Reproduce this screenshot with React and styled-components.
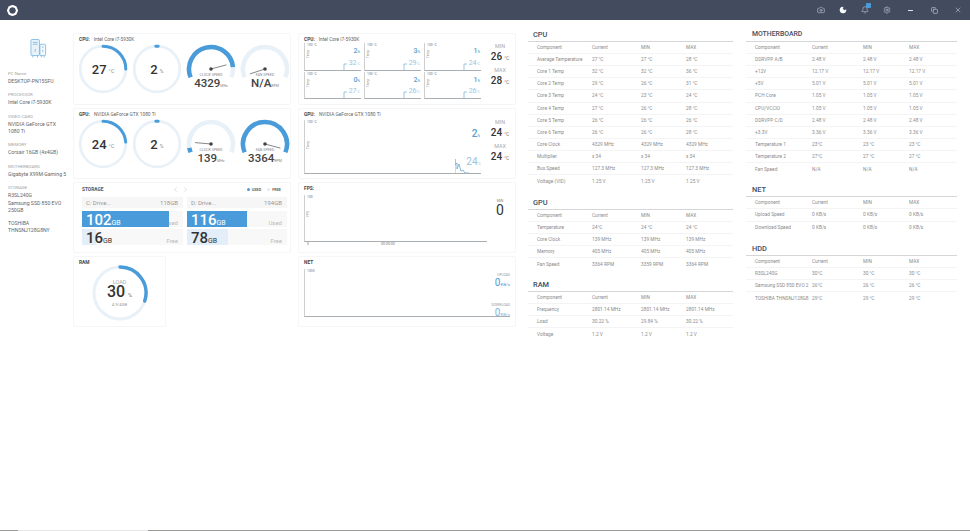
import styled, { createGlobalStyle } from 'styled-components';
import { Camera, Moon, Bell, Settings, Minus, Copy, X, ChevronLeft, ChevronRight } from 'lucide-react';

const GlobalStyle = createGlobalStyle`
    html, body { margin: 0; height: 100%; background: #fff; }
    body { font-family: Roboto, "Liberation Sans", sans-serif; overflow: hidden; }
    #root { height: 100%; }
`;

const BLUE = '#4a9bd9';
const TRACK = '#e9f1f8';

const Page = styled.div`
    display: flex;
    flex-direction: column;
    height: 531px;
    width: 970px;
    overflow: hidden;
`;

const TopBar = styled.header`
    flex: 0 0 20px;
    height: 20px;
    background: #434c5e;
    box-sizing: border-box;
    display: flex;
    align-items: center;
    padding-left: 7px;
`;

const TopIcons = styled.div`
    margin-left: auto;
    display: flex;
    align-items: center;
`;

const TopIcon = styled.span`
    position: relative;
    width: ${(p) => p.$w || 22}px;
    display: flex;
    justify-content: center;
    color: #b4bac6;
`;

const Badge = styled.span`
    position: absolute;
    top: -3px;
    left: 12px;
    width: 5px;
    height: 5px;
    border-radius: 1px;
    background: ${BLUE};
`;

const Main = styled.main`
    flex: 1;
    display: flex;
    padding-top: 13px;
    min-height: 0;
`;

const Sidebar = styled.aside`
    flex: 0 0 73px;
    box-sizing: border-box;
    padding: 5px 6px 0 8px;
`;

const PcIcon = styled.div`
    display: flex;
    justify-content: center;
    margin: 0 0 11px 0;
    padding-left: 1px;
`;

const InfoLabel = styled.div`
    font-size: 4.4px;
    line-height: 7px;
    color: #a4a4a4;
    margin-top: ${(p) => p.$top ?? 6.4}px;
`;

const InfoValue = styled.div`
    font-size: 5.15px;
    line-height: 7px;
    color: #666;
    margin-top: ${(p) => p.$top ?? 1}px;
`;

const Dash = styled.section`
    flex: 0 0 443px;
    display: grid;
    grid-template-columns: 218px 218px;
    grid-template-rows: 72px 71px 71px 71px;
    gap: 3px 7px;
    align-content: start;
`;

const Card = styled.div`
    position: relative;
    box-sizing: border-box;
    border: 1px solid #f5f6f7;
    border-radius: 2px;
    background: #fff;
    padding: 2px 5px 0;
    width: ${(p) => p.$width || 'auto'};
`;

const CardTitle = styled.div`
    display: flex;
    gap: 4px;
    font-size: 4.8px;
    line-height: 7px;
    color: #666;
    & b { font-weight: 700; color: #444; }
`;

const GaugeRow = styled.div`
    display: grid;
    grid-template-columns: repeat(4, 54px);
    margin: 1px 0 0 -3px;
`;

const GaugeBox = styled.div`
    position: relative;
    width: 54px;
    height: 52px;
    display: flex;
    justify-content: center;
    & svg { display: block; }
`;

const RingText = styled.div`
    position: absolute;
    inset: 0 0 2px 0;
    display: flex;
    align-items: center;
    justify-content: center;
    gap: 2px;
    font-size: 13px;
    font-weight: 500;
    color: #333;
    letter-spacing: 0.2px;
    & small { font-size: 5px; font-weight: 400; color: #888; margin-top: 3px; }
`;

const SpeedText = styled.div`
    position: absolute;
    left: 0;
    right: 0;
    top: 29px;
    text-align: center;
    color: #444;
    font-size: 11.5px;
    font-weight: 500;
    line-height: 11px;
    & span { display: block; font-size: 3.6px; line-height: 5px; font-weight: 400; color: #888; }
    & small { font-size: 3.6px; font-weight: 400; color: #888; }
`;

function arc(cx, cy, r, a0, a1) {
    const p = (a) => [cx + r * Math.sin((a * Math.PI) / 180), cy - r * Math.cos((a * Math.PI) / 180)];
    const [x0, y0] = p(a0);
    const [x1, y1] = p(a1);
    return `M${x0} ${y0}A${r} ${r} 0 ${a1 - a0 > 180 ? 1 : 0} 1 ${x1} ${y1}`;
}

function Ring({ value, unit, from = 0, to }) {
    return (
        <GaugeBox>
            <svg width="50" height="50" viewBox="0 0 50 50">
                <circle cx="25" cy="25" r="22.8" fill="none" stroke={TRACK} strokeWidth="2.8" />
                <path d={arc(25, 25, 22.8, from, to)} fill="none" stroke={BLUE} strokeWidth="3" strokeLinecap="round" />
            </svg>
            <RingText>
                {value}
                <small>{unit}</small>
            </RingText>
        </GaugeBox>
    );
}

function Speed({ value, label, unit, to, needle }) {
    const rad = (needle * Math.PI) / 180;
    return (
        <GaugeBox>
            <svg width="50" height="50" viewBox="0 0 50 50">
                <path d={arc(25, 25, 22, -112, 112)} fill="none" stroke={TRACK} strokeWidth="4.5" />
                <path d={arc(25, 25, 22, -112, to)} fill="none" stroke={BLUE} strokeWidth="4.5" />
                <line x1="25" y1="25" x2={25 + 16 * Math.sin(rad)} y2={25 - 16 * Math.cos(rad)} stroke="#555" strokeWidth="0.7" />
                <circle cx="25" cy="25" r="1.8" fill="#444" />
            </svg>
            <SpeedText>
                <span>{label}</span>
                {value}
                <small>{unit}</small>
            </SpeedText>
        </GaugeBox>
    );
}

const ChartGrid = styled.div`
    display: grid;
    grid-template-columns: repeat(3, 57px);
    grid-auto-rows: 27.5px;
    gap: 1px 3px;
`;

const ChartLayout = styled.div`
    display: flex;
    margin-top: ${(p) => p.$top ?? 2}px;
`;

const Plot = styled.div`
    position: relative;
    box-sizing: border-box;
    width: ${(p) => p.$width || 'auto'};
    height: ${(p) => p.$height || 'auto'};
    border-left: 1px solid #cfcfcf;
    border-bottom: 1px solid #a9aeb2;
`;

const PlotMax = styled.span`
    position: absolute;
    left: 2px;
    top: 0;
    font-size: 3.4px;
    line-height: 4px;
    color: #777;
`;

const PlotAxis = styled.span`
    position: absolute;
    left: 1px;
    top: ${(p) => p.$top}px;
    font-size: 3.2px;
    line-height: 4px;
    color: #888;
    writing-mode: vertical-rl;
    transform: rotate(180deg);
`;

const PlotLoad = styled.span`
    position: absolute;
    right: ${(p) => p.$right ?? 1}px;
    top: ${(p) => p.$top}px;
    font-size: ${(p) => p.$size}px;
    line-height: 1;
    font-weight: 500;
    color: #5a9fc9;
    & small { font-size: 3.4px; }
`;

const PlotTemp = styled.span`
    position: absolute;
    right: ${(p) => p.$right ?? 1}px;
    bottom: ${(p) => p.$bottom}px;
    font-size: ${(p) => p.$size}px;
    line-height: 1;
    color: #9cc4de;
    & small { font-size: 3.4px; }
`;

const Spark = styled.svg`
    position: absolute;
    left: ${(p) => p.$left}px;
    bottom: 0;
`;

function MiniChart({ load, temp }) {
    return (
        <Plot>
            <PlotMax>100 °C</PlotMax>
            <PlotAxis $top={7}>Temp</PlotAxis>
            <PlotLoad $top={5} $size={7}>
                {load}
                <small>%</small>
            </PlotLoad>
            <PlotTemp $bottom={3} $size={7}>
                {temp}
                <small>°C</small>
            </PlotTemp>
            <Spark $left={38} width="5" height="8" viewBox="0 0 5 8">
                <path d="M1 8V2H4" fill="none" stroke="#5a9fc9" strokeWidth="0.6" />
            </Spark>
        </Plot>
    );
}

const Extremes = styled.div`
    flex: 1;
    display: flex;
    flex-direction: column;
    align-items: center;
    margin: ${(p) => p.$top || 0}px -2px 0 7px;
`;

const ExtremeLabel = styled.div`
    font-size: 5.4px;
    line-height: 7px;
    color: #aaa;
    margin-top: ${(p) => p.$top || 0}px;
`;

const ExtremeValue = styled.div`
    font-size: 10px;
    line-height: 12px;
    font-weight: 500;
    color: #333;
    margin-top: 1px;
    & small { font-size: 5px; font-weight: 400; color: #777; margin-left: 2px; }
`;

const FpsSide = styled.div`
    flex: 1;
    display: flex;
    flex-direction: column;
    align-items: center;
    padding-top: 4px;
    margin-right: -3px;
    font-size: 3.6px;
    color: #888;
    line-height: 5px;
    & strong { font-size: 14px; line-height: 12px; font-weight: 400; color: #333; }
`;

const TickRow = styled.div`
    position: absolute;
    top: 100%;
    left: 2px;
    right: 0;
    display: flex;
    font-size: 3.6px;
    line-height: 6px;
    color: #777;
    & span:last-child { margin-left: 72px; }
`;

const NetLabel = styled.span`
    position: absolute;
    right: 0;
    top: ${(p) => p.$top}px;
    font-size: 3.4px;
    line-height: 4px;
    color: #999;
`;

const NetValue = styled.span`
    position: absolute;
    right: 0;
    top: ${(p) => p.$top}px;
    font-size: 10px;
    line-height: 10px;
    color: ${(p) => p.$color};
    & small { font-size: 4.4px; }
`;

const StorageHead = styled.div`
    display: flex;
    align-items: center;
    height: 9px;
    padding: 0 4px 0 3px;
    font-size: 4.8px;
    font-weight: 700;
    color: #555;
`;

const Arrows = styled.div`
    display: flex;
    gap: 3px;
    color: #b9c8d6;
    margin-left: 69px;
`;

const Legend = styled.div`
    margin-left: auto;
    display: flex;
    gap: 6px;
    font-size: 3.8px;
    color: #666;
`;

const LegendDot = styled.span`
    &::before {
        content: '';
        display: inline-block;
        width: 3px;
        height: 3px;
        border-radius: 50%;
        margin-right: 2px;
        background: ${(p) => p.$color};
    }
`;

const Drives = styled.div`
    display: grid;
    grid-template-columns: 101px 100px;
    gap: 0 4px;
    margin: 3px 0 0 3px;
`;

const Drive = styled.div`
    display: flex;
    flex-direction: column;
    gap: 2px;
`;

const DriveHead = styled.div`
    display: flex;
    justify-content: space-between;
    align-items: center;
    height: 11px;
    padding: 0 5px 0 4px;
    background: #f6f6f6;
    font-size: 6px;
    color: #999;
    margin-bottom: 1px;
`;

const DriveBar = styled.div`
    position: relative;
    height: 16px;
    background: #f8f8f8;
    overflow: hidden;
`;

const DriveFill = styled.div`
    position: absolute;
    inset: 0 auto 0 0;
    background: ${(p) => p.$color};
`;

const DriveTag = styled.span`
    position: absolute;
    right: 5px;
    bottom: 1px;
    font-size: 6px;
    line-height: 7px;
    color: #bbb;
`;

const DriveNum = styled.span`
    position: absolute;
    left: 4px;
    top: 2px;
    font-size: 15px;
    line-height: 14px;
    font-weight: 500;
    color: ${(p) => p.$color};
    & small { font-size: 7px; font-weight: 400; }
`;

function DriveRow({ value, tag, pct, fill, color }) {
    return (
        <DriveBar>
            <DriveTag>{tag}</DriveTag>
            <DriveFill $color={fill} style={{ width: `${pct}%` }} />
            <DriveNum $color={color}>
                {value}
                <small>GB</small>
            </DriveNum>
        </DriveBar>
    );
}

const RamGauge = styled.div`
    position: relative;
    display: flex;
    justify-content: center;
    margin-top: -1px;
`;

const RamText = styled.div`
    position: absolute;
    inset: 0;
    display: flex;
    flex-direction: column;
    align-items: center;
    justify-content: center;
    font-size: 5.4px;
    line-height: 6px;
    color: #aaa;
    & strong { font-size: 16px; line-height: 13px; font-weight: 500; color: #333; }
    & small { font-size: 5.5px; font-weight: 400; color: #777; margin-left: 3px; }
    & em { font-style: normal; font-size: 4.2px; line-height: 5px; color: #999; }
`;

const Tables = styled.section`
    flex: 0 0 ${(p) => p.$width}px;
    margin: -1px 0 0 ${(p) => p.$left}px;
    display: flex;
    flex-direction: column;
`;

const TableWrap = styled.div`
    margin-bottom: ${(p) => p.$gap || 0}px;
`;

const TableTitle = styled.div`
    height: 9px;
    line-height: 5px;
    padding-left: ${(p) => p.$indent}px;
    box-sizing: border-box;
    font-size: ${(p) => p.$size}px;
    font-weight: 500;
    color: #434c5e;
`;

const TRow = styled.div`
    display: grid;
    grid-template-columns: ${(p) => p.$columns};
    align-items: center;
    height: ${(p) => (p.$head ? 13 : 12.15)}px;
    box-sizing: border-box;
    padding-left: 9px;
    border-bottom: 1px solid #f4f4f4;
    border-top: ${(p) => (p.$head ? '1px solid #d5d6d8' : 'none')};
    font-size: 4.8px;
    color: #8c8c8c;
    white-space: nowrap;
    &:last-child { border-bottom: none; }
`;

function DataTable({ title, columns, rows, gap, indent = 5, size = 7.4 }) {
    return (
        <TableWrap $gap={gap}>
            <TableTitle $indent={indent} $size={size}>{title}</TableTitle>
            <div>
                <TRow $columns={columns} $head>
                    <span>Component</span>
                    <span>Current</span>
                    <span>MIN</span>
                    <span>MAX</span>
                </TRow>
                {rows.map((row) => (
                    <TRow $columns={columns} key={row[0]}>
                        {row.map((cell, i) => (
                            <span key={i}>{cell}</span>
                        ))}
                    </TRow>
                ))}
            </div>
        </TableWrap>
    );
}

const ScrollTrack = styled.div`
    flex: 0 0 1px;
    background: #9a9a96;
    padding-left: 18px;
`;

const ScrollThumb = styled.div`
    width: 130px;
    height: 1px;
    background: #e6e6e6;
`;

const same = (name, v) => [name, v, v, v];
const temp = (name, c, a, b) => [name, `${c} °C`, `${a} °C`, `${b} °C`];

const cpuRows = [
    temp('Average Temperature', 27, 27, 28),
    temp('Core 1 Temp', 32, 32, 36),
    temp('Core 2 Temp', 29, 26, 31),
    temp('Core 3 Temp', 24, 23, 24),
    temp('Core 4 Temp', 27, 26, 28),
    temp('Core 5 Temp', 26, 26, 26),
    temp('Core 6 Temp', 26, 26, 28),
    same('Core Clock', '4329 MHz'),
    same('Multiplier', 'x 34'),
    same('Bus Speed', '127.3 MHz'),
    same('Voltage (VID)', '1.25 V'),
];

const gpuRows = [
    ['Temperature', '24°C', '24 °C', '24 °C'],
    same('Core Clock', '139 MHz'),
    same('Memory', '405 MHz'),
    ['Fan Speed', '3364 RPM', '3359 RPM', '3364 RPM'],
];

const ramRows = [
    same('Frequency', '2801.14 MHz'),
    ['Load', '30.22 %', '29.84 %', '30.22 %'],
    same('Voltage', '1.2 V'),
];

const boardRows = [
    same('DDRVPP A/B', '2.48 V'),
    same('+12V', '12.17 V'),
    same('+5V', '5.01 V'),
    same('PCH Core', '1.05 V'),
    same('CPU/VCCIO', '1.05 V'),
    same('DDRVPP C/D', '2.48 V'),
    same('+3.3V', '3.36 V'),
    ['Temperature 1', '23°C', '23 °C', '23 °C'],
    ['Temperature 2', '27°C', '27 °C', '27 °C'],
    same('Fan Speed', 'N/A'),
];

const netRows = [same('Upload Speed', '0 KB/s'), same('Download Speed', '0 KB/s')];

const hddRows = [
    ['R3SL240G', '30°C', '30 °C', '30 °C'],
    ['Samsung SSD 850 EVO 2', '26°C', '26 °C', '26 °C'],
    ['TOSHIBA THNSNJ128G8', '29°C', '29 °C', '29 °C'],
];

const LEFT_COLS = '55px 49px 45px 1fr';
const RIGHT_COLS = '57px 51px 46px 1fr';

function Logo() {
    return (
        <svg width="11" height="11" viewBox="0 0 11 11">
            <path d="M5.5 1 8.7 2.3 10 5.5 8.7 8.7 5.5 10 2.3 8.7 1 5.5 2.3 2.3Z" fill="none" stroke="#fff" strokeWidth="2" strokeLinejoin="round" />
        </svg>
    );
}

function Tower() {
    return (
        <svg width="17" height="21" viewBox="0 0 18 21" fill="none" stroke="#6fb0de" strokeWidth="0.8">
            <rect x="1" y="1" width="9" height="17" rx="1.2" fill="#e8f2fa" />
            <rect x="10.5" y="6" width="6" height="12" rx="1" fill="#f2f8fc" />
            <path d="M3 4h5M3 6h5M12.5 9h2M5.5 11v3M13.5 12v2M3 18v2M8 18v2M12 18v2M15 18v2" />
        </svg>
    );
}

export default function App() {
    return (
        <Page>
            <GlobalStyle />
            <TopBar>
                <Logo />
                <TopIcons>
                    <TopIcon><Camera size={8} /></TopIcon>
                    <TopIcon><Moon size={8} fill="#fff" color="#fff" /></TopIcon>
                    <TopIcon>
                        <Bell size={8} />
                        <Badge />
                    </TopIcon>
                    <TopIcon><Settings size={8} /></TopIcon>
                    <TopIcon $w={24}><Minus size={7} strokeWidth={3} color="#fff" /></TopIcon>
                    <TopIcon $w={24}><Copy size={7} strokeWidth={2.5} /></TopIcon>
                    <TopIcon $w={24}><X size={8} /></TopIcon>
                </TopIcons>
            </TopBar>
            <Main>
                <Sidebar>
                    <PcIcon><Tower /></PcIcon>
                    <InfoLabel $top={0}>PC Name</InfoLabel>
                    <InfoValue>DESKTOP-PN15SFU</InfoValue>
                    <InfoLabel>PROCESSOR</InfoLabel>
                    <InfoValue>Intel Core i7-5930K</InfoValue>
                    <InfoLabel>VIDEO CARD</InfoLabel>
                    <InfoValue>NVIDIA GeForce GTX 1080 Ti</InfoValue>
                    <InfoLabel>MEMORY</InfoLabel>
                    <InfoValue>Corsair 16GB (4x4GB)</InfoValue>
                    <InfoLabel>MOTHERBOARD</InfoLabel>
                    <InfoValue>Gigabyte X99M-Gaming 5</InfoValue>
                    <InfoLabel>STORAGE</InfoLabel>
                    <InfoValue>R3SL240G</InfoValue>
                    <InfoValue>Samsung SSD 850 EVO 250GB</InfoValue>
                    <InfoValue $top={6}>TOSHIBA THNSNJ128G8NY</InfoValue>
                </Sidebar>
                <Dash>
                    <Card>
                        <CardTitle><b>CPU:</b> Intel Core i7-5930K</CardTitle>
                        <GaugeRow>
                            <Ring value="27" unit="°C" to={90} />
                            <Ring value="2" unit="%" from={-3} to={3} />
                            <Speed value="4329" unit="MHz" label="CLOCK SPEED" to={85} needle={75} />
                            <Speed value="N/A" unit="RPM" label="FAN SPEED" to={-112} needle={-108} />
                        </GaugeRow>
                    </Card>
                    <Card>
                        <CardTitle><b>CPU:</b> Intel Core i7-5930K</CardTitle>
                        <ChartLayout $top={0}>
                            <ChartGrid>
                                <MiniChart load="2" temp="32" />
                                <MiniChart load="3" temp="29" />
                                <MiniChart load="1" temp="24" />
                                <MiniChart load="0" temp="27" />
                                <MiniChart load="2" temp="26" />
                                <MiniChart load="1" temp="26" />
                            </ChartGrid>
                            <Extremes>
                                <ExtremeLabel>MIN</ExtremeLabel>
                                <ExtremeValue>26<small>°C</small></ExtremeValue>
                                <ExtremeLabel $top={3}>MAX</ExtremeLabel>
                                <ExtremeValue>28<small>°C</small></ExtremeValue>
                            </Extremes>
                        </ChartLayout>
                    </Card>
                    <Card>
                        <CardTitle><b>GPU:</b> NVIDIA GeForce GTX 1080 Ti</CardTitle>
                        <GaugeRow>
                            <Ring value="24" unit="°C" to={85} />
                            <Ring value="2" unit="%" from={-3} to={3} />
                            <Speed value="139" unit="MHz" label="CLOCK SPEED" to={-100} needle={-85} />
                            <Speed value="3364" unit="RPM" label="FAN SPEED" to={112} needle={105} />
                        </GaugeRow>
                    </Card>
                    <Card>
                        <CardTitle><b>GPU:</b> NVIDIA GeForce GTX 1080 Ti</CardTitle>
                        <ChartLayout>
                            <Plot $width="177px" $height="54px">
                                <PlotMax>100 °C</PlotMax>
                                <PlotAxis $top={21}>Temp</PlotAxis>
                                <PlotLoad $top={9} $size={10}>2<small>%</small></PlotLoad>
                                <PlotTemp $bottom={6} $size={10} $right={0}>24<small>°C</small></PlotTemp>
                                <Spark $left={150} width="14" height="15" viewBox="0 0 14 15">
                                    <path d="M0 15V1V7L2 5V11L4 6L6 13L8 12L10 15H14" fill="none" stroke="#5a9fc9" strokeWidth="0.7" />
                                </Spark>
                            </Plot>
                            <Extremes $top={-1}>
                                <ExtremeLabel>MIN</ExtremeLabel>
                                <ExtremeValue>24<small>°C</small></ExtremeValue>
                                <ExtremeLabel $top={3}>MAX</ExtremeLabel>
                                <ExtremeValue>24<small>°C</small></ExtremeValue>
                            </Extremes>
                        </ChartLayout>
                    </Card>
                    <Card>
                        <StorageHead>
                            STORAGE
                            <Arrows>
                                <ChevronLeft size={7} />
                                <ChevronRight size={7} />
                            </Arrows>
                            <Legend>
                                <LegendDot $color={BLUE}>USED</LegendDot>
                                <LegendDot $color="#dfe9f2">FREE</LegendDot>
                            </Legend>
                        </StorageHead>
                        <Drives>
                            <Drive>
                                <DriveHead><span>C: Drive...</span><span>118GB</span></DriveHead>
                                <DriveRow value="102" tag="Used" pct={86} fill={BLUE} color="#fff" />
                                <DriveRow value="16" tag="Free" pct={14} fill="#e3eef8" color="#333" />
                            </Drive>
                            <Drive>
                                <DriveHead><span>D: Drive...</span><span>194GB</span></DriveHead>
                                <DriveRow value="116" tag="Used" pct={60} fill={BLUE} color="#fff" />
                                <DriveRow value="78" tag="Free" pct={41} fill="#e3eef8" color="#333" />
                            </Drive>
                        </Drives>
                    </Card>
                    <Card>
                        <CardTitle><b>FPS:</b></CardTitle>
                        <ChartLayout $top={3}>
                            <Plot $width="183px" $height="47px">
                                <PlotMax>100</PlotMax>
                                <PlotAxis $top={16}>FPS</PlotAxis>
                                <TickRow><span>0</span><span>00:00:00</span></TickRow>
                            </Plot>
                            <FpsSide>
                                MIN
                                <strong>0</strong>
                            </FpsSide>
                        </ChartLayout>
                    </Card>
                    <Card $width="93px">
                        <CardTitle><b>RAM</b></CardTitle>
                        <RamGauge>
                            <svg width="56" height="56" viewBox="0 0 56 56">
                                <circle cx="28" cy="28" r="26" fill="none" stroke={TRACK} strokeWidth="3" />
                                <path d={arc(28, 28, 26, 0, 108)} fill="none" stroke={BLUE} strokeWidth="3.4" strokeLinecap="round" />
                            </svg>
                            <RamText>
                                LOAD
                                <strong>30<small>%</small></strong>
                                <em>4.9/4GB</em>
                            </RamText>
                        </RamGauge>
                    </Card>
                    <Card>
                        <CardTitle><b>NET</b></CardTitle>
                        <ChartLayout $top={3}>
                            <Plot $width="206px" $height="48px">
                                <PlotMax>1000</PlotMax>
                                <NetLabel $top={4}>UPLOAD</NetLabel>
                                <NetValue $top={9} $color="#4a9bd9">0<small>KB/s</small></NetValue>
                                <NetLabel $top={34}>DOWNLOAD</NetLabel>
                                <NetValue $top={39} $color="#7fb6dc">0<small>KB/s</small></NetValue>
                            </Plot>
                        </ChartLayout>
                    </Card>
                </Dash>
                <Tables $left={12} $width={205}>
                    <DataTable title="CPU" columns={LEFT_COLS} rows={cpuRows} gap={12} />
                    <DataTable title="GPU" columns={LEFT_COLS} rows={gpuRows} gap={12} />
                    <DataTable title="RAM" columns={LEFT_COLS} rows={ramRows} />
                </Tables>
                <Tables $left={13} $width={211}>
                    <DataTable title="MOTHERBOARD" columns={RIGHT_COLS} rows={boardRows} gap={12} indent={6} size={6.9} />
                    <DataTable title="NET" columns={RIGHT_COLS} rows={netRows} gap={12} indent={6} />
                    <DataTable title="HDD" columns={RIGHT_COLS} rows={hddRows} indent={6} />
                </Tables>
            </Main>
            <ScrollTrack>
                <ScrollThumb />
            </ScrollTrack>
        </Page>
    );
}
